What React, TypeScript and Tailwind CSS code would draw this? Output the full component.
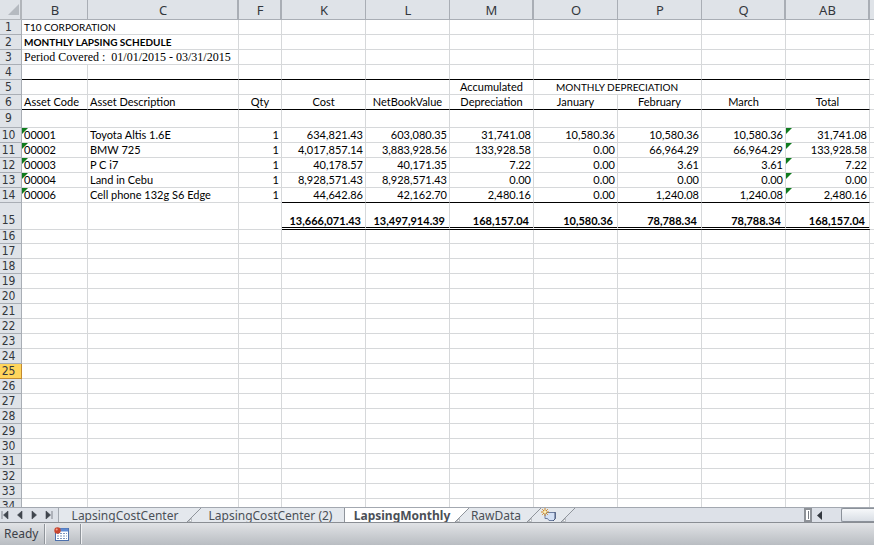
import clsx from "clsx";

type Line = "none" | "grid" | "black" | "double";

type Cell = {
  text?: string;
  flag?: boolean;
  align?: "left" | "center" | "right";
  spill?: boolean;
};

type SheetRow = {
  n: number;
  cells?: Cell[];
  height?: string;
  line?: Line;
  lineFrom?: number;
  bold?: boolean;
  serif?: boolean;
  total?: boolean;
};

const columns = [
  { name: "B", width: "w-[66px]" },
  { name: "C", width: "w-[151px]", gap: true },
  { name: "F", width: "w-[43px]", gap: true },
  { name: "K", width: "w-[84px]" },
  { name: "L", width: "w-[84px]" },
  { name: "M", width: "w-[84px]", gap: true },
  { name: "O", width: "w-[84px]" },
  { name: "P", width: "w-[84px]" },
  { name: "Q", width: "w-[84px]", gap: true },
  { name: "AB", width: "w-[84px]", gap: true },
];

const assets = [
  ["00001", "Toyota Altis 1.6E", "1", "634,821.43", "603,080.35", "31,741.08", "10,580.36", "10,580.36", "10,580.36", "31,741.08"],
  ["00002", "BMW 725", "1", "4,017,857.14", "3,883,928.56", "133,928.58", "0.00", "66,964.29", "66,964.29", "133,928.58"],
  ["00003", "P C i7", "1", "40,178.57", "40,171.35", "7.22", "0.00", "3.61", "3.61", "7.22"],
  ["00004", "Land in Cebu", "1", "8,928,571.43", "8,928,571.43", "0.00", "0.00", "0.00", "0.00", "0.00"],
  ["00006", "Cell phone 132g S6 Edge", "1", "44,642.86", "42,162.70", "2,480.16", "0.00", "1,240.08", "1,240.08", "2,480.16"],
];

const headings = ["Asset Code", "Asset Description", "Qty", "Cost", "NetBookValue", "Depreciation", "January", "February", "March", "Total"];

const totals = ["", "", "", "13,666,071.43", "13,497,914.39", "168,157.04", "10,580.36", "78,788.34", "78,788.34", "168,157.04"];

const rows: SheetRow[] = [
  { n: 1, cells: [{ text: "T10 CORPORATION", spill: true }] },
  { n: 2, cells: [{ text: "MONTHLY LAPSING SCHEDULE", spill: true }], bold: true },
  { n: 3, cells: [{ text: "Period Covered :  01/01/2015 - 03/31/2015", spill: true }], serif: true },
  { n: 4, line: "black" },
  {
    n: 5,
    cells: [{}, {}, {}, {}, {}, { text: "Accumulated", align: "center" }, { text: "MONTHLY DEPRECIATION", spill: true }],
  },
  {
    n: 6,
    line: "black",
    cells: headings.map((text, i) => ({ text, align: i < 2 ? "left" : "center" })),
  },
  { n: 9, height: "h-[18px]" },
  ...assets.map((asset, r): SheetRow => ({
    n: 10 + r,
    line: r === assets.length - 1 ? "black" : "grid",
    lineFrom: 3,
    cells: asset.map((text, i) => ({
      text,
      align: i < 2 ? "left" : "right",
      flag: i === 0 || i === 9,
    })),
  })),
  {
    n: 15,
    height: "h-[27px]",
    line: "double",
    lineFrom: 3,
    bold: true,
    total: true,
    cells: totals.map((text) => ({ text, align: "right" })),
  },
  { n: 16, height: "h-[14px]" },
  ...Array.from({ length: 18 }, (_, i): SheetRow => ({ n: 17 + i })),
];

function SheetCell({ row, index }: { row: SheetRow; index: number }) {
  const cell = row.cells?.[index] ?? {};
  const line = index >= (row.lineFrom ?? 0) ? (row.line ?? "grid") : "grid";

  return (
    <td
      className={clsx(
        "relative p-0 whitespace-pre",
        row.total ? "align-bottom" : "align-middle",
        line === "grid" && "border-b border-b-[#d6d8da]",
        line === "black" && "border-b border-b-black",
        line === "double" && "border-b-3 border-double border-b-black",
        !cell.spill && "border-r border-r-[#d6d8da]",
        row.bold && "font-bold",
        row.serif && "font-['Liberation_Serif',serif]",
      )}
    >
      {cell.flag && (
        <span className="absolute top-0 left-0 h-[6px] w-[6px] bg-[#0f7b1e] [clip-path:polygon(0_0,100%_0,0_100%)]" />
      )}
      {cell.text && (
        <div
          className={clsx(
            "h-[14px]",
            row.total ? "leading-[15px]" : "leading-[14px]",
            index === 6 && cell.spill ? "pl-[22px]" : "pl-[2px]",
            row.total ? "pr-1" : "pr-[2px]",
            cell.spill && "w-0",
            cell.spill && (row.serif ? "text-xs" : "text-[10px]"),
            cell.align === "center" && "text-center",
            cell.align === "right" && "text-right",
          )}
        >
          {cell.text}
        </div>
      )}
    </td>
  );
}

function Sheet() {
  return (
    <table className="w-full table-fixed border-separate border-spacing-0 font-[Lato,sans-serif] text-[11px] text-black">
      <thead>
        <tr className="h-5 bg-[#dfe3e8] font-['Noto_Sans',sans-serif] text-[13px] text-[#33373c]">
          <th className="w-[22px] border-r-2 border-b border-[#b1b5ba] p-0">
            <svg className="ml-auto h-[11px] w-3" viewBox="0 0 12 11" aria-label="Select all">
              <path d="M11 0V11H0Z" fill="#b5bac0" />
            </svg>
          </th>
          {columns.map((column) => (
            <th
              key={column.name}
              scope="col"
              className={clsx(
                "border-b border-[#a9aeb5] p-0 font-normal",
                column.width,
                column.gap ? "border-r-2" : "border-r",
              )}
            >
              <div className="h-[19px] pl-px leading-[21px]">{column.name}</div>
            </th>
          ))}
          <th className="border-b border-[#a9aeb5] p-0" />
        </tr>
      </thead>
      <tbody>
        {rows.map((row) => (
          <tr key={row.n} className={row.height ?? "h-[15px]"}>
            <th
              scope="row"
              className={clsx(
                "border-r border-b p-0 pr-1 font-['DejaVu_Sans_Condensed','DejaVu_Sans',sans-serif] text-xs font-normal text-[#33373c]",
                row.total ? "pb-[2px] align-bottom" : "align-middle",
                row.n === 25 ? "border-[#c28a30] bg-[#ffd55c]" : "border-[#a9aeb5] bg-[#dfe3e8]",
              )}
            >
              <div className="h-[13px] leading-[13px]">{row.n}</div>
            </th>
            {columns.map((column, i) => (
              <SheetCell key={column.name} row={row} index={i} />
            ))}
            <td className="border-b border-b-[#d6d8da] p-0" />
          </tr>
        ))}
      </tbody>
    </table>
  );
}

function Slant({ left, right }: { left: string; right: string }) {
  return (
    <svg className="h-[14px] w-[14px] shrink-0" viewBox="0 0 14 14">
      <path d="M0 0H14L0 14Z" fill={left} />
      <path d="M14 0V14H0Z" fill={right} />
      <path d="M0 14L14 0" stroke="#8f949b" fill="none" />
      <path d="M1.5 13.5L4.5 10.5V13.5Z" fill="#fff" stroke="#a3a8ae" strokeWidth=".7" />
    </svg>
  );
}

const navButtons = [
  { label: "First sheet", path: "M2 1V9M3.5 5L8 1V9Z" },
  { label: "Previous sheet", path: "M2.5 5L7 1V9Z" },
  { label: "Next sheet", path: "M7.5 5L3 1V9Z" },
  { label: "Last sheet", path: "M8 1V9M6.5 5L2 1V9Z" },
];

function SheetTabs() {
  return (
    <nav className="flex h-[15px] shrink-0 border-t border-[#a3a8b0] bg-[#dde1e8] font-['Noto_Sans',sans-serif] text-xs text-[#4b5057]">
      <div className="flex w-[59px] shrink-0 items-center justify-between border-r border-[#a3a8b0] pr-1">
        {navButtons.map((button) => (
          <button key={button.label} aria-label={button.label}>
            <svg className="h-[10px] w-[10px]" viewBox="0 0 10 10">
              <path d={button.path} fill="#3f454d" stroke="#3f454d" strokeWidth=".6" />
            </svg>
          </button>
        ))}
      </div>
      <button className="w-32 shrink-0 bg-[#e4e8ed] pl-1 leading-4">LapsingCostCenter</button>
      <Slant left="#e4e8ed" right="#e4e8ed" />
      <button className="w-36 shrink-0 border-r border-[#8f949b] bg-[#e4e8ed] pr-1 leading-4">
        LapsingCostCenter (2)
      </button>
      <button className="w-[110px] shrink-0 bg-white pl-1 leading-4 font-bold">LapsingMonthly</button>
      <Slant left="#fff" right="#e4e8ed" />
      <button className="w-[58px] shrink-0 bg-[#e4e8ed] pr-1 leading-4">RawData</button>
      <Slant left="#e4e8ed" right="#e4e8ed" />
      <button className="w-5 shrink-0 bg-[#e4e8ed]" aria-label="Insert worksheet">
        <svg className="h-[14px] w-4" viewBox="0 0 16 14">
          <path d="M4 4.5H14.5V10.5L12.5 12.5H8L6.5 10.5H4Z" fill="#d3e0f4" stroke="#6c7d9f" />
          <path d="M14 4V11L12 13" stroke="#465779" fill="none" />
          <path d="M4 0V8M0 4H8M1.2 1.2L6.8 6.8M6.8 1.2L1.2 6.8" stroke="#d08a28" />
          <circle cx="4" cy="4" r="1.5" fill="#fff0b0" />
        </svg>
      </button>
      <Slant left="#e4e8ed" right="#dde1e8" />
      <div className="min-w-0 flex-1" />
      <div className="flex w-2 shrink-0 items-center justify-center border-2 border-[#8d9197] bg-white">
        <span className="h-2 w-px bg-[#777b82]" />
      </div>
      <button className="flex w-[29px] shrink-0 items-center pl-[5px]" aria-label="Scroll left">
        <svg className="h-[9px] w-[6px]" viewBox="0 0 6 9">
          <path d="M0 4.5L5 0V9Z" fill="#33383f" />
        </svg>
      </button>
      <button
        className="w-[33px] shrink-0 rounded-l-xs border border-r-0 border-[#8b919a] bg-linear-to-b from-[#f6f8fa] to-[#d9dee5]"
        aria-label="Horizontal scroll"
      />
    </nav>
  );
}

function StatusBar() {
  return (
    <footer className="flex h-[23px] shrink-0 items-center border-t border-[#8a8e94] bg-linear-to-b from-[#e1e3e6] to-[#b9bdc2] font-['Noto_Sans',sans-serif] text-xs text-[#3d4148]">
      <span className="w-11 shrink-0 pl-1">Ready</span>
      <span className="h-5 w-[2px] border-l border-[#8f949a] bg-[#f0f1f3]" />
      <button className="ml-2 w-[26px]" aria-label="Record macro">
        <svg className="h-[14px] w-4" viewBox="0 0 16 14">
          <rect x="1.5" y="1.5" width="13" height="12" fill="#fff" stroke="#4c70ad" />
          <path d="M2 3H14" stroke="#5f8ad2" strokeWidth="3" />
          <path d="M3 6.5H13M3 9H13M3 11.5H13" stroke="#7d95bd" strokeDasharray="2 1" />
          <circle cx="3.5" cy="3.5" r="3.2" fill="#c9452e" />
          <circle cx="2.7" cy="2.6" r="1" fill="#f2a08e" />
        </svg>
      </button>
      <span className="h-5 w-[2px] border-l border-[#8f949a] bg-[#f0f1f3]" />
    </footer>
  );
}

export default function App() {
  return (
    <div className="flex h-screen flex-col overflow-hidden bg-white">
      <main className="min-h-0 flex-1 overflow-hidden">
        <Sheet />
      </main>
      <SheetTabs />
      <StatusBar />
    </div>
  );
}
